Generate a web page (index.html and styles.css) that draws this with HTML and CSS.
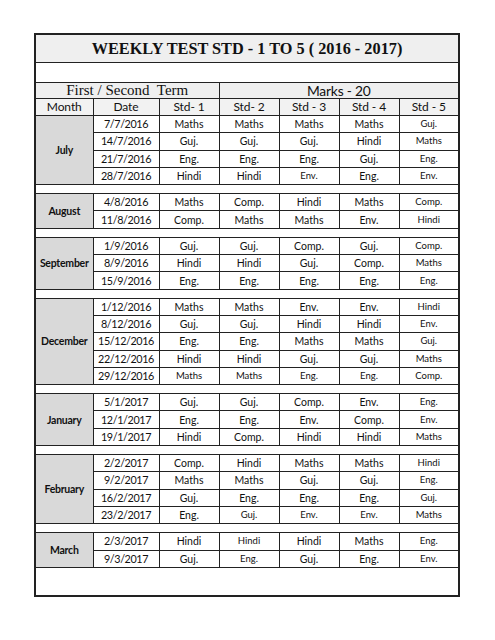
FILE: index.html
```html
<!DOCTYPE html>
<html>
<head>
<meta charset="utf-8">
<link rel="stylesheet" href="styles.css">
</head>
<body>
<table class="sheet">
  <colgroup>
    <col class="c-month"><col class="c-date"><col class="c-std"><col class="c-std"><col class="c-std"><col class="c-std"><col class="c-std">
  </colgroup>
  <tr class="r-title"><td colspan="7" class="title">WEEKLY TEST STD - 1 TO 5 ( 2016 - 2017)</td></tr>
  <tr class="r-blank"><td colspan="7"></td></tr>
  <tr class="r-term"><td colspan="3" class="term">First / Second&nbsp; Term</td><td colspan="4" class="marks">Marks - 20</td></tr>
  <tr class="r-head"><td>Month</td><td>Date</td><td>Std- 1</td><td>Std- 2</td><td>Std - 3</td><td>Std - 4</td><td>Std - 5</td></tr>

  <tr class="r"><td rowspan="4" class="month">July</td><td class="date">7/7/2016</td><td>Maths</td><td>Maths</td><td>Maths</td><td>Maths</td><td class="sm">Guj.</td></tr>
  <tr class="r"><td class="date">14/7/2016</td><td>Guj.</td><td>Guj.</td><td>Guj.</td><td>Hindi</td><td class="sm">Maths</td></tr>
  <tr class="r"><td class="date">21/7/2016</td><td>Eng.</td><td>Eng.</td><td>Eng.</td><td>Guj.</td><td class="sm">Eng.</td></tr>
  <tr class="r"><td class="date">28/7/2016</td><td>Hindi</td><td>Hindi</td><td class="sm">Env.</td><td>Eng.</td><td class="sm">Env.</td></tr>
  <tr class="gap"><td colspan="7"></td></tr>

  <tr class="r"><td rowspan="2" class="month">August</td><td class="date">4/8/2016</td><td>Maths</td><td>Comp.</td><td>Hindi</td><td>Maths</td><td class="sm">Comp.</td></tr>
  <tr class="r"><td class="date">11/8/2016</td><td>Comp.</td><td>Maths</td><td>Maths</td><td>Env.</td><td class="sm">Hindi</td></tr>
  <tr class="gap"><td colspan="7"></td></tr>

  <tr class="r"><td rowspan="3" class="month">September</td><td class="date">1/9/2016</td><td>Guj.</td><td>Guj.</td><td>Comp.</td><td>Guj.</td><td class="sm">Comp.</td></tr>
  <tr class="r"><td class="date">8/9/2016</td><td>Hindi</td><td>Hindi</td><td>Guj.</td><td>Comp.</td><td class="sm">Maths</td></tr>
  <tr class="r"><td class="date">15/9/2016</td><td>Eng.</td><td>Eng.</td><td>Eng.</td><td>Eng.</td><td class="sm">Eng.</td></tr>
  <tr class="gap"><td colspan="7"></td></tr>

  <tr class="r"><td rowspan="5" class="month">December</td><td class="date">1/12/2016</td><td>Maths</td><td>Maths</td><td>Env.</td><td>Env.</td><td class="sm">Hindi</td></tr>
  <tr class="r"><td class="date">8/12/2016</td><td>Guj.</td><td>Guj.</td><td>Hindi</td><td>Hindi</td><td class="sm">Env.</td></tr>
  <tr class="r"><td class="date">15/12/2016</td><td>Eng.</td><td>Eng.</td><td>Maths</td><td>Maths</td><td class="sm">Guj.</td></tr>
  <tr class="r"><td class="date">22/12/2016</td><td>Hindi</td><td>Hindi</td><td>Guj.</td><td>Guj.</td><td class="sm">Maths</td></tr>
  <tr class="r"><td class="date">29/12/2016</td><td class="sm">Maths</td><td class="sm">Maths</td><td class="sm">Eng.</td><td class="sm">Eng.</td><td class="sm">Comp.</td></tr>
  <tr class="gap"><td colspan="7"></td></tr>

  <tr class="r"><td rowspan="3" class="month">January</td><td class="date">5/1/2017</td><td>Guj.</td><td>Guj.</td><td>Comp.</td><td>Env.</td><td class="sm">Eng.</td></tr>
  <tr class="r"><td class="date">12/1/2017</td><td>Eng.</td><td>Eng.</td><td>Env.</td><td>Comp.</td><td class="sm">Env.</td></tr>
  <tr class="r"><td class="date">19/1/2017</td><td>Hindi</td><td>Comp.</td><td>Hindi</td><td>Hindi</td><td class="sm">Maths</td></tr>
  <tr class="gap"><td colspan="7"></td></tr>

  <tr class="r"><td rowspan="4" class="month">February</td><td class="date">2/2/2017</td><td>Comp.</td><td>Hindi</td><td>Maths</td><td>Maths</td><td class="sm">Hindi</td></tr>
  <tr class="r"><td class="date">9/2/2017</td><td>Maths</td><td>Maths</td><td>Guj.</td><td>Guj.</td><td class="sm">Eng.</td></tr>
  <tr class="r"><td class="date">16/2/2017</td><td>Guj.</td><td>Eng.</td><td>Eng.</td><td>Eng.</td><td class="sm">Guj.</td></tr>
  <tr class="r"><td class="date">23/2/2017</td><td>Eng.</td><td class="sm">Guj.</td><td class="sm">Env.</td><td class="sm">Env.</td><td class="sm">Maths</td></tr>
  <tr class="gap"><td colspan="7"></td></tr>

  <tr class="r"><td rowspan="2" class="month">March</td><td class="date">2/3/2017</td><td>Hindi</td><td class="sm">Hindi</td><td>Hindi</td><td>Maths</td><td class="sm">Eng.</td></tr>
  <tr class="r"><td class="date">9/3/2017</td><td>Guj.</td><td class="sm">Eng.</td><td>Guj.</td><td>Eng.</td><td class="sm">Env.</td></tr>
  <tr class="r-end"><td colspan="7"></td></tr>
</table>
</body>
</html>
```
FILE: styles.css
```css
html, body {
  margin: 0;
  padding: 0;
  background: #ffffff;
}
body {
  padding: 33px 0 0 34px;
  font-family: Lato, "Liberation Sans", sans-serif;
  color: #111111;
}
.sheet {
  border-collapse: collapse;
  table-layout: fixed;
  width: 424px;
  border: 2px solid #222222;
}
.c-month { width: 58px; }
.c-date { width: 66px; }
.c-std { width: 60px; }
.sheet td {
  border: 1px solid #222222;
  padding: 0;
  text-align: center;
  vertical-align: middle;
  font-size: 10.5px;
  line-height: 12px;
  white-space: nowrap;
  overflow: hidden;
}
.sheet .title {
  height: 27px;
  background: #efefef;
  font-family: "Liberation Serif", serif;
  font-weight: bold;
  font-size: 16.3px;
  color: #111;
}
.r-blank td { height: 19px; }
.r-term td {
  height: 15px;
  background: #efefef;
}
.sheet .term {
  font-family: "Liberation Serif", serif;
  font-size: 15px;
  line-height: 15px;
}
.sheet .marks {
  font-size: 13.8px;
  letter-spacing: -0.2px;
  line-height: 15px;
}
.r-head td {
  height: 16px;
  background: #f2f2f2;
}
.sheet .r-head td {
  font-size: 12px;
  letter-spacing: -0.1px;
}
.r td { height: 16.3px; }
.sheet .date {
  font-size: 10.8px;
  letter-spacing: -0.4px;
}
.sheet .month {
  background: #d9d9d9;
  font-weight: bold;
  font-size: 10.5px;
  letter-spacing: -0.25px;
}
.sheet .sm { font-size: 9.5px; }
.gap td { height: 8px; border-left: 0; border-right: 0; }
.r-end td { height: 27px; }
```
